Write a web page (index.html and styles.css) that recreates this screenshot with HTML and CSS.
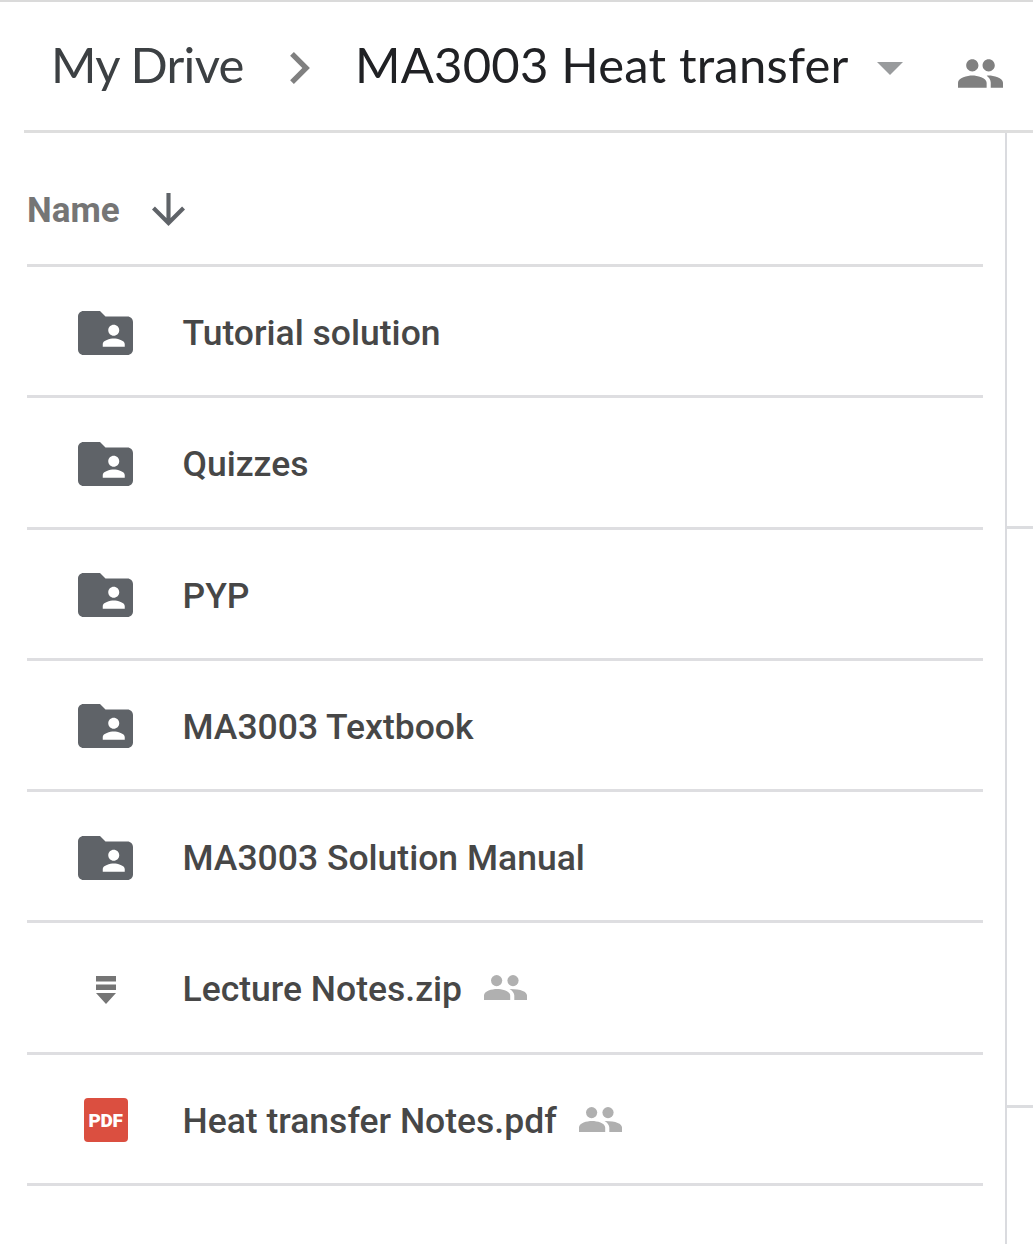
FILE: index.html
```html
<!DOCTYPE html>
<html lang="en">
<head>
  <meta charset="UTF-8">
  <meta name="viewport" content="width=device-width, initial-scale=1.0">
  <title>MA3003 Heat transfer - My Drive</title>
  <link rel="stylesheet" href="styles.css">
</head>
<body>
  <svg class="defs" width="0" height="0">
    <symbol id="folder" viewBox="2 4 20 16">
      <path d="M20 6h-8l-2-2H4c-1.1 0-2 .9-2 2v12c0 1.1.9 2 2 2h16c1.1 0 2-.9 2-2V8c0-1.1-.9-2-2-2zm-5 3c1.1 0 2 .9 2 2s-.9 2-2 2-2-.9-2-2 .9-2 2-2zm4 8h-8v-1c0-1.33 2.67-2 4-2s4 .67 4 2v1z"/>
    </symbol>
    <symbol id="shared" viewBox="0 0 43 26">
      <circle cx="12.6" cy="5.6" r="5.6"/>
      <circle cx="29" cy="5.6" r="5.6"/>
      <path d="M0 25v-4.5C0 16 8 14 13 14s13.2 2 13.2 6.5V25zM25.5 14.1C37 14 43 17 43 20.5V25H30.3v-4.5c0-2.3-2-4.9-4.8-6.4z"/>
    </symbol>
  </svg>

  <header class="breadcrumb">
    <a class="crumb">My Drive</a>
    <svg class="chevron" viewBox="8.59 6 7.41 12"><path d="M10 6L8.59 7.41 13.17 12l-4.58 4.59L10 18l6-6z"/></svg>
    <h1 class="current">MA3003 Heat transfer</h1>
    <span class="caret"></span>
    <svg class="people" viewBox="1 5 22 14"><path d="M16 11c1.66 0 2.99-1.34 2.99-3S17.66 5 16 5s-3 1.34-3 3 1.34 3 3 3zm-8 0c1.66 0 2.99-1.34 2.99-3S9.66 5 8 5 5 6.34 5 8s1.34 3 3 3zm0 2c-2.33 0-7 1.17-7 3.5V19h14v-2.5c0-2.33-4.67-3.5-7-3.5zm8 0c-.29 0-.62.02-.97.05 1.16.84 1.97 1.97 1.97 3.45V19h6v-2.5c0-2.33-4.67-3.5-7-3.5z"/></svg>
  </header>

  <div class="content">
    <main class="files">
      <div class="list-head">
        <span class="label">Name</span>
        <svg class="sort" viewBox="4 4 16 16"><path d="M20 12l-1.41-1.41L13 16.17V4h-2v12.17l-5.58-5.59L4 12l8 8 8-8z"/></svg>
      </div>
      <ul class="rows">
        <li class="row">
          <span class="icon"><svg class="folder"><use href="#folder"/></svg></span>
          <span class="name">Tutorial solution</span>
        </li>
        <li class="row">
          <span class="icon"><svg class="folder"><use href="#folder"/></svg></span>
          <span class="name">Quizzes</span>
        </li>
        <li class="row">
          <span class="icon"><svg class="folder"><use href="#folder"/></svg></span>
          <span class="name">PYP</span>
        </li>
        <li class="row">
          <span class="icon"><svg class="folder"><use href="#folder"/></svg></span>
          <span class="name">MA3003 Textbook</span>
        </li>
        <li class="row">
          <span class="icon"><svg class="folder"><use href="#folder"/></svg></span>
          <span class="name">MA3003 Solution Manual</span>
        </li>
        <li class="row">
          <span class="icon"><svg class="zip" viewBox="0 0 20 28"><path d="M0 0h20v5.5H0zM0 8.500h20V14H0zM0 17h20L10 28z"/></svg></span>
          <span class="name">Lecture Notes.zip</span>
          <svg class="shared"><use href="#shared"/></svg>
        </li>
        <li class="row">
          <span class="icon"><span class="pdf">PDF</span></span>
          <span class="name">Heat transfer Notes.pdf</span>
          <svg class="shared"><use href="#shared"/></svg>
        </li>
      </ul>
    </main>
    <aside class="details">
      <div class="section first"></div>
      <div class="section second"></div>
    </aside>
  </div>
</body>
</html>
```

FILE: styles.css
```css
* {
  box-sizing: border-box;
}
body {
  margin: 0;
  height: 1244px;
  overflow: hidden;
  background: #fff;
  color: #474747;
  font-family: Roboto, "Liberation Sans", sans-serif;
  border-top: 2px solid #dadada;
  display: flex;
  flex-direction: column;
}
.defs {
  position: absolute;
}
svg {
  display: block;
  flex: none;
}

/* breadcrumb */
.breadcrumb {
  height: 131px;
  margin-left: 24px;
  padding-left: 27px;
  border-bottom: 3px solid #dedede;
  display: flex;
  align-items: center;
  flex: none;
  font-family: Lato, "Open Sans", sans-serif;
  font-size: 49px;
  white-space: nowrap;
}
.crumb {
  width: 239px;
  padding-bottom: 4px;
  color: #3c4043;
  letter-spacing: -0.7px;
}
.chevron {
  width: 20px;
  height: 32px;
  margin-top: 3px;
  fill: #808080;
}
.current {
  margin: 0 0 0 45px;
  padding-bottom: 4px;
  width: 522px;
  font-size: inherit;
  font-weight: 400;
  color: #202124;
  letter-spacing: 0.2px;
}
.caret {
  border: 13.5px solid transparent;
  border-top-color: #999b9d;
  border-bottom: 0;
  margin-top: 5px;
}
.people {
  width: 45px;
  height: 29px;
  margin: 14px 0 0 55px;
  fill: #808080;
}

/* file list */
.content {
  flex: 1;
  display: flex;
}
.files {
  width: 1005px;
  padding: 0 22px 0 27px;
}
.list-head {
  height: 134px;
  border-bottom: 3px solid #dedee0;
  padding-top: 22px;
  display: flex;
  align-items: center;
  gap: 32px;
  font-size: 35px;
  font-weight: 700;
  color: #757575;
}
.label {
  padding-top: 2px;
}
.sort {
  width: 33px;
  height: 33px;
  fill: #5f6368;
}
.rows {
  list-style: none;
  margin: 0;
  padding: 0;
}
.row {
  height: 131.25px;
  border-bottom: 3px solid #dedee1;
  display: flex;
  align-items: center;
}
.icon {
  width: 155.5px;
  padding: 3px 0 0 1.5px;
  display: flex;
  justify-content: center;
}
.folder {
  width: 55px;
  height: 44px;
  fill: #5f6368;
}
.zip {
  width: 20px;
  height: 28px;
  margin-top: 2px;
  fill: #757575;
}
.pdf {
  width: 44px;
  height: 44px;
  border-radius: 4px;
  background: #db4f40;
  color: #fff;
  font-size: 19px;
  font-weight: 900;
  letter-spacing: -0.3px;
  line-height: 45px;
  text-align: center;
}
.name {
  font-size: 35.5px;
  font-weight: 500;
  white-space: nowrap;
  padding-top: 4px;
}
.shared {
  width: 43px;
  height: 26px;
  margin: 2px 0 0 22px;
  fill: #b0b0b0;
}

/* side panel */
.details {
  flex: 1;
  border-left: 2px solid #dadbdf;
}
.section {
  border-bottom: 3px solid #dcdde0;
}
.first {
  height: 396px;
}
.second {
  height: 579px;
}
```
